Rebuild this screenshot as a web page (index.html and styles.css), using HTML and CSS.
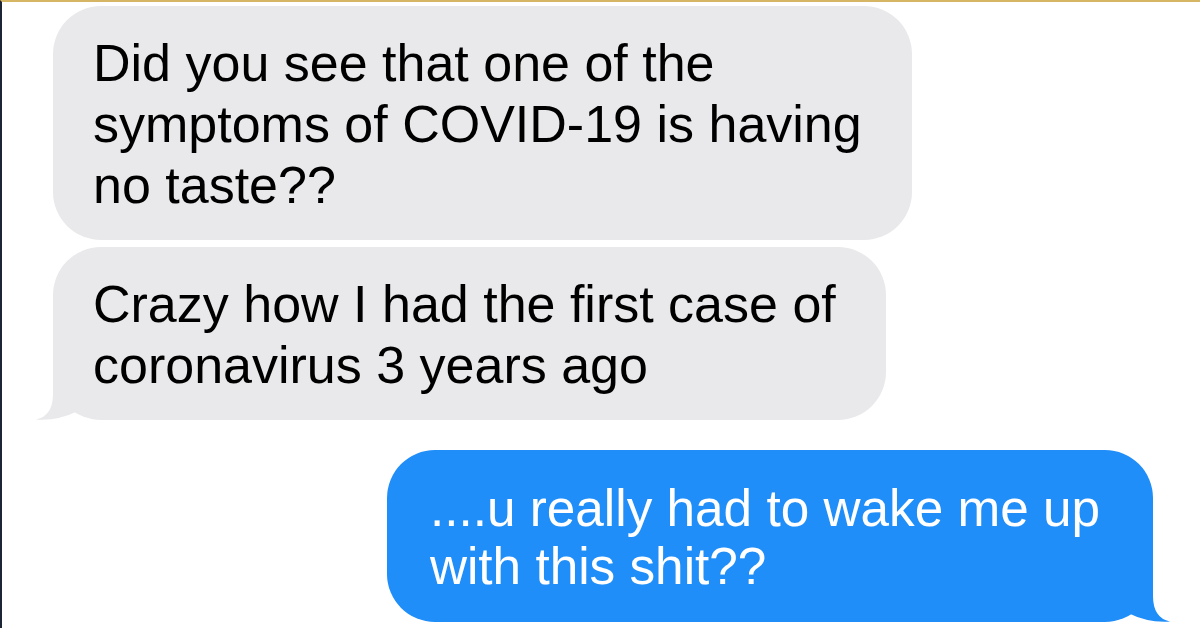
FILE: index.html
```html
<!DOCTYPE html>
<html lang="en">
<head>
    <meta charset="UTF-8">
    <title>Messages</title>
    <link rel="stylesheet" href="styles.css">
</head>
<body>
    <div class="screen">
        <div class="thread">
            <div class="msg them">Did you see that one of the<br>symptoms of COVID-19 is having<br>no taste??</div>
            <div class="msg them tail">Crazy how I had the first case of<br>coronavirus 3 years ago<svg class="tail-shape" width="60" height="50" viewBox="0 0 60 50"><path d="M17 0 L17 24 Q17 46 0 49.5 Q22 51 42 41 L42 0 Z"/></svg></div>
            <div class="msg me tail">....u really had to wake me up<br>with this shit??<svg class="tail-shape" width="60" height="50" viewBox="0 0 60 50"><path d="M17 0 L17 24 Q17 46 0 49.5 Q22 51 42 41 L42 0 Z"/></svg></div>
        </div>
    </div>
</body>
</html>
```

FILE: styles.css
```css
*{ margin: 0; padding: 0; box-sizing: border-box; }
html,body{
    width:100%;
    height:100%;
    overflow: hidden;
    background: #fff;
}
.screen{
    height:100%;
    border-top: 2px solid #d6b565;
    border-left: 2px solid #1b2535;
    font-family: "Liberation Sans", Arial, sans-serif;
}
.thread{
    display: flex;
    flex-direction: column;
    align-items: flex-start;
    padding: 4px 47px 0 51px;
}
.msg{
    position: relative;
    font-size: 52px;
    line-height: 61px;
    padding: 27px 50px 24px 40px;
    border-radius: 48px;
    white-space: nowrap;
}
.them{
    background: #e9e9eb;
    color: #000;
}
.them + .them{
    margin-top: 7px;
}
.me{
    align-self: flex-end;
    margin-top: 30px;
    font-size: 51.3px;
    line-height: 58px;
    padding: 30px 53px 26px 43px;
    background: #1f8ef8;
    color: #fff;
}
.tail-shape{
    position: absolute;
    bottom: 0;
    left: -17px;
}
.them .tail-shape{
    fill: #e9e9eb;
}
.me .tail-shape{
    left: auto;
    right: -17px;
    fill: #1f8ef8;
    transform: scaleX(-1);
}
```
